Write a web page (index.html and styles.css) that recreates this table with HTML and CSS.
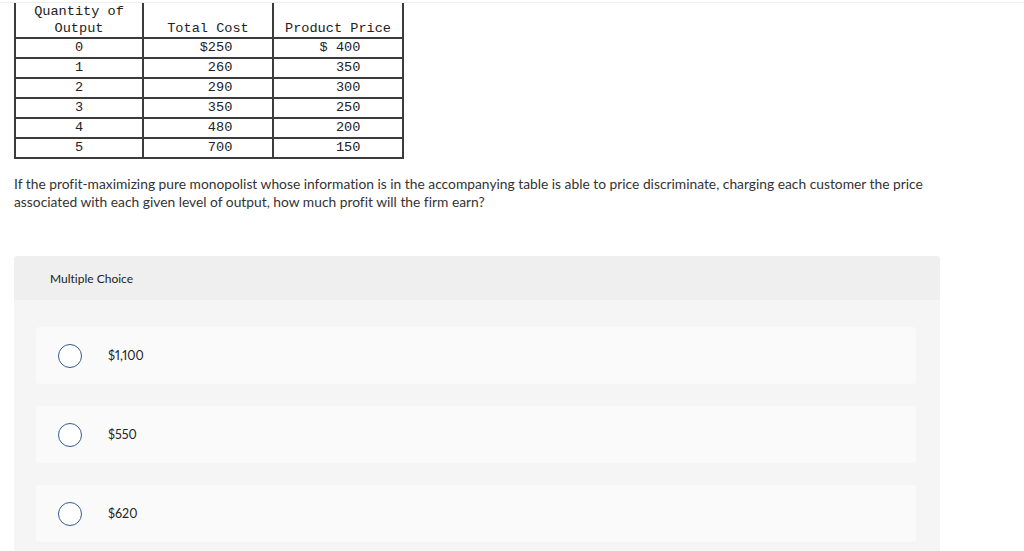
FILE: index.html
```html
<!DOCTYPE html>
<html>
<head>
<meta charset="utf-8">
<link rel="stylesheet" href="styles.css">
</head>
<body>
<div class="topline"></div>
<div class="page">
  <table class="data">
    <tr class="head">
      <th class="c1">Quantity of<br>Output</th>
      <th class="c2">Total Cost</th>
      <th class="c3">Product Price</th>
    </tr>
    <tr><td class="c1">0</td><td class="c2">$250</td><td class="c3">$ 400</td></tr>
    <tr><td class="c1">1</td><td class="c2"> 260</td><td class="c3">  350</td></tr>
    <tr><td class="c1">2</td><td class="c2"> 290</td><td class="c3">  300</td></tr>
    <tr><td class="c1">3</td><td class="c2"> 350</td><td class="c3">  250</td></tr>
    <tr><td class="c1">4</td><td class="c2"> 480</td><td class="c3">  200</td></tr>
    <tr><td class="c1">5</td><td class="c2"> 700</td><td class="c3">  150</td></tr>
  </table>

  <p class="question">If the profit-maximizing pure monopolist whose information is in the accompanying table is able to price discriminate, charging each customer the price associated with each given level of output, how much profit will the firm earn?</p>

  <section class="mc">
    <div class="mc-head">Multiple Choice</div>
    <div class="mc-body">
      <div class="option"><span class="radio"></span><span class="label">$1,100</span></div>
      <div class="option"><span class="radio"></span><span class="label">$550</span></div>
      <div class="option"><span class="radio"></span><span class="label">$620</span></div>
    </div>
  </section>
</div>
</body>
</html>
```

FILE: styles.css
```css
html, body {
  margin: 0;
  padding: 0;
  background: #ffffff;
}
body {
  font-family: "Lato", "Open Sans", sans-serif;
  color: #2b2b2b;
  overflow: hidden;
  font-variant-numeric: proportional-nums;
  font-variant-ligatures: none;
}
.topline {
  height: 2px;
  border-bottom: 1px solid #efefef;
}
.page {
  padding: 0 0 0 14px;
}
.data {
  border-collapse: separate;
  border-spacing: 0;
  border-left: 2px solid #3c3c3c;
  font-family: "Liberation Mono", "Courier New", monospace;
  font-size: 13.6px;
  color: #222;
}
.data th, .data td {
  border-right: 2px solid #3c3c3c;
  border-bottom: 2px solid #3c3c3c;
  padding: 0;
  text-align: center;
  font-weight: normal;
  white-space: pre;
}
.data th {
  height: 34px;
  line-height: 17px;
  vertical-align: bottom;
}
.data td {
  height: 18px;
  line-height: 18px;
}
.c1 { width: 126px; }
.c2 { width: 128px; }
.c3 { width: 128px; }
.data td.c2 { padding-left: 16px; width: 112px; }
.data td.c3 { padding-left: 4px; width: 124px; }

.question {
  margin: 16px 0 0 0;
  font-size: 13.8px;
  line-height: 17.5px;
  color: #333;
  width: 960px;
}
.mc {
  margin-top: 46px;
  width: 926px;
  border-radius: 3px 3px 0 0;
  overflow: hidden;
}
.mc-head {
  height: 44px;
  background: #efefef;
  padding-left: 36px;
  display: flex;
  align-items: center;
  font-size: 12px;
  color: #222;
}
.mc-body {
  background: #f5f5f5;
  padding: 27px 24px 20px 22px;
  display: flex;
  flex-direction: column;
  gap: 22px;
}
.option {
  height: 57px;
  background: #fafafa;
  border-radius: 4px;
  display: flex;
  align-items: center;
  padding-left: 22px;
}
.radio {
  width: 22px;
  height: 22px;
  border: 1px solid #2f5c91;
  border-radius: 50%;
  background: #fff;
  flex: none;
}
.label {
  margin-left: 26px;
  font-size: 12.5px;
  color: #222;
}
```
